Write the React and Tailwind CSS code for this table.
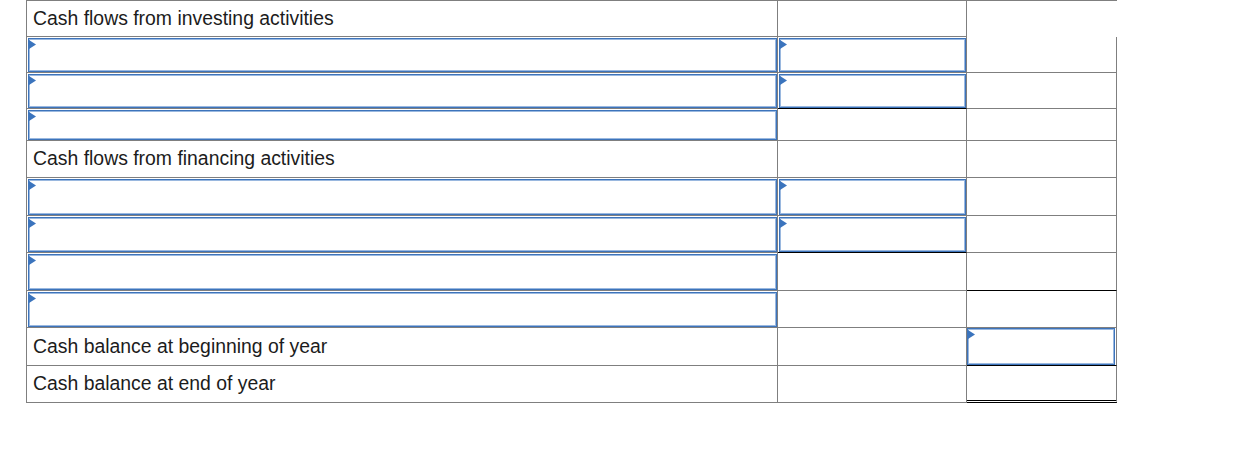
import React from "react";

const G = "border-[#7f7f7f]";

function Input() {
  return (
    <div className="relative box-border h-full w-full border border-[#3d74bb] bg-white shadow-[inset_0_0_0_1px_#9ab8df]">
      <svg className="absolute left-0 top-[1px]" width="7" height="9" viewBox="0 0 7 9">
        <polygon points="0,0 7,4.5 0,9" fill="#3b74bd" />
      </svg>
    </div>
  );
}

const rows = [
  { h: "h-[36px]", label: "Cash flows from investing activities", c3: "none" },
  { h: "h-[36px]", c1: true, c2: true, c3: "topless" },
  { h: "h-[36px]", c1: true, c2: true, c2black: true },
  { h: "h-[32px]", c1: true },
  { h: "h-[37px]", label: "Cash flows from financing activities" },
  { h: "h-[38px]", c1: true, c2: true },
  { h: "h-[37px]", c1: true, c2: true, c2black: true },
  { h: "h-[38px]", c1: true, c3black: true },
  { h: "h-[37px]", c1: true },
  { h: "h-[38px]", label: "Cash balance at beginning of year", c3input: true, c3black: true },
  { h: "h-[37px]", label: "Cash balance at end of year", c3double: true },
];

export default function App() {
  return (
    <div className="h-[461px] w-[1245px] bg-white font-['Liberation_Sans',Arial,sans-serif] text-[19.4px] text-[#1c1c1c]">
      <div className={`ml-[26px] w-[1091px] border-l border-t ${G}`}>
        {rows.map((r, i) => {
          let c3cls = `border-r border-b ${G}`;
          if (r.c3 === "none") c3cls = "";
          if (r.c3black) c3cls = `border-r ${G} border-b border-b-black`;
          if (r.c3double) c3cls = `border-r ${G} border-b-[3px] border-double border-b-black`;
          return (
            <div key={i} className={`flex ${r.h}`}>
              <div className={`box-border w-[751px] border-b border-r ${G} ${r.c1 ? "pl-px pt-px" : "flex items-center pl-[6px] leading-none"}`}>
                {r.c1 ? <Input /> : r.label}
              </div>
              <div className={`box-border w-[189px] border-r ${G} ${r.c2black ? "border-b border-b-black" : `border-b ${G}`} ${r.c2 ? "pl-px pt-px" : ""}`}>
                {r.c2 ? <Input /> : null}
              </div>
              <div className={`box-border w-[150px] ${c3cls} ${r.c3input ? "pr-px" : ""}`}>
                {r.c3input ? <Input /> : null}
              </div>
            </div>
          );
        })}
      </div>
    </div>
  );
}
